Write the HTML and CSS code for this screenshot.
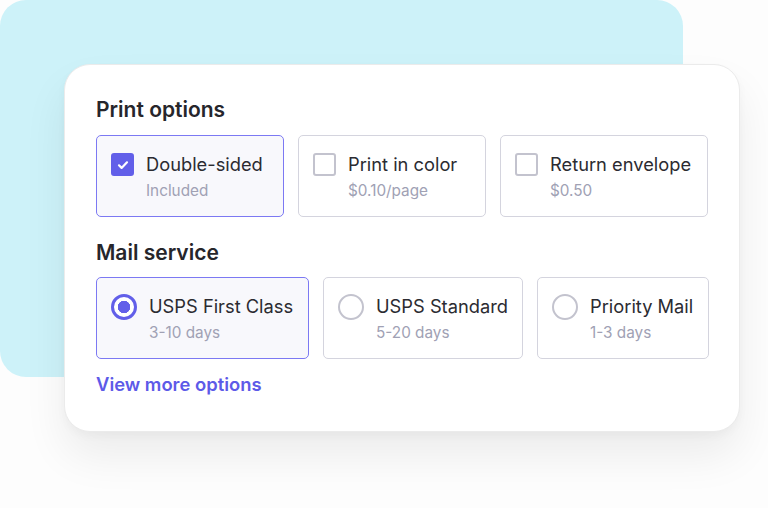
FILE: index.html
```html
<!DOCTYPE html>
<html lang="en">

<head>
    <meta charset="UTF-8">
    <meta name="viewport" content="width=device-width, initial-scale=1.0">
    <title>Mail options</title>
    <link rel="stylesheet" href="styles.css">
</head>

<body>
    <div class="scene">
        <div class="backdrop"></div>
        <div class="panel">
            <h2>Print options</h2>
            <div class="options print-row">
                <label class="option selected">
                    <span class="check checked">
                        <svg width="14" height="14" viewBox="0 0 14 14"><path d="M3 7.3l2.6 2.6L11 4.3" fill="none" stroke="#fff" stroke-width="2.2" stroke-linecap="round" stroke-linejoin="round"/></svg>
                    </span>
                    <span class="text">
                        <span class="title">Double-sided</span>
                        <span class="sub">Included</span>
                    </span>
                </label>
                <label class="option">
                    <span class="check"></span>
                    <span class="text">
                        <span class="title">Print in color</span>
                        <span class="sub">$0.10/page</span>
                    </span>
                </label>
                <label class="option">
                    <span class="check"></span>
                    <span class="text">
                        <span class="title">Return envelope</span>
                        <span class="sub">$0.50</span>
                    </span>
                </label>
            </div>

            <h2>Mail service</h2>
            <div class="options mail-row">
                <label class="option selected">
                    <span class="radio checked"></span>
                    <span class="text">
                        <span class="title">USPS First Class</span>
                        <span class="sub">3-10 days</span>
                    </span>
                </label>
                <label class="option">
                    <span class="radio"></span>
                    <span class="text">
                        <span class="title">USPS Standard</span>
                        <span class="sub">5-20 days</span>
                    </span>
                </label>
                <label class="option">
                    <span class="radio"></span>
                    <span class="text">
                        <span class="title">Priority Mail</span>
                        <span class="sub">1-3 days</span>
                    </span>
                </label>
            </div>

            <a class="more" href="#">View more options</a>
        </div>
    </div>
</body>
</html>
```

FILE: styles.css
```css
body {
    margin: 0;
    background-color: #fdfdfd;
    font-family: Inter, "Noto Sans", sans-serif;
    color: #2b2b31;
    overflow: hidden;
}

.scene {
    position: relative;
    width: 768px;
    height: 508px;
    padding: 64px 0 0 64px;
    box-sizing: border-box;
}

.backdrop {
    position: absolute;
    left: 0;
    top: 0;
    width: 683px;
    height: 377px;
    background-color: #cdf2f9;
    border-radius: 26px;
}

.panel {
    position: relative;
    width: 676px;
    height: 368px;
    box-sizing: border-box;
    padding: 31px 31px 0 31px;
    background-color: #ffffff;
    border: 1px solid #ebebeb;
    border-radius: 26px;
    box-shadow: 0 24px 44px rgba(0, 0, 0, 0.07), 0 4px 10px rgba(0, 0, 0, 0.03);
}

h2 {
    margin: 0;
    font-size: 21px;
    font-weight: 600;
    line-height: 28px;
    color: #26262b;
}

.options {
    display: grid;
    gap: 14px;
    margin: 11px 0 22px 0;
}

.print-row {
    grid-template-columns: 188px 188px 208px;
}

.mail-row {
    grid-template-columns: 213px 200px 172px;
    margin-top: 10px;
    margin-bottom: 12px;
}

.option {
    display: flex;
    align-items: flex-start;
    gap: 12px;
    height: 82px;
    box-sizing: border-box;
    padding: 16px 14px 15px 14px;
    border: 1.5px solid #d4d4de;
    border-radius: 5px;
    background-color: #ffffff;
}

.option.selected {
    border-color: #7c79f3;
    background-color: #f8f8fc;
}

.check {
    flex: none;
    width: 23px;
    height: 23px;
    margin-top: 1px;
    box-sizing: border-box;
    border: 2px solid #c3c3ce;
    border-radius: 3px;
    display: flex;
    align-items: center;
    justify-content: center;
}

.check.checked {
    background-color: #625fe9;
    border-color: #625fe9;
}

.radio {
    flex: none;
    width: 26px;
    height: 26px;
    margin-top: 0;
    box-sizing: border-box;
    border: 2px solid #c3c3ce;
    border-radius: 50%;
}

.radio.checked {
    border: 3px solid #625fe9;
    background-color: #ffffff;
    background-image: radial-gradient(circle, #625fe9 0, #625fe9 6px, transparent 6.5px);
}

.text {
    display: flex;
    flex-direction: column;
}

.title {
    font-size: 18.3px;
    line-height: 24px;
    color: #2b2b31;
}

.sub {
    margin-top: 5px;
    font-size: 15.3px;
    line-height: 20px;
    color: #a0a1b4;
}

.more {
    font-size: 18.4px;
    font-weight: 600;
    line-height: 26px;
    color: #5d5ae8;
    text-decoration: none;
}
```
